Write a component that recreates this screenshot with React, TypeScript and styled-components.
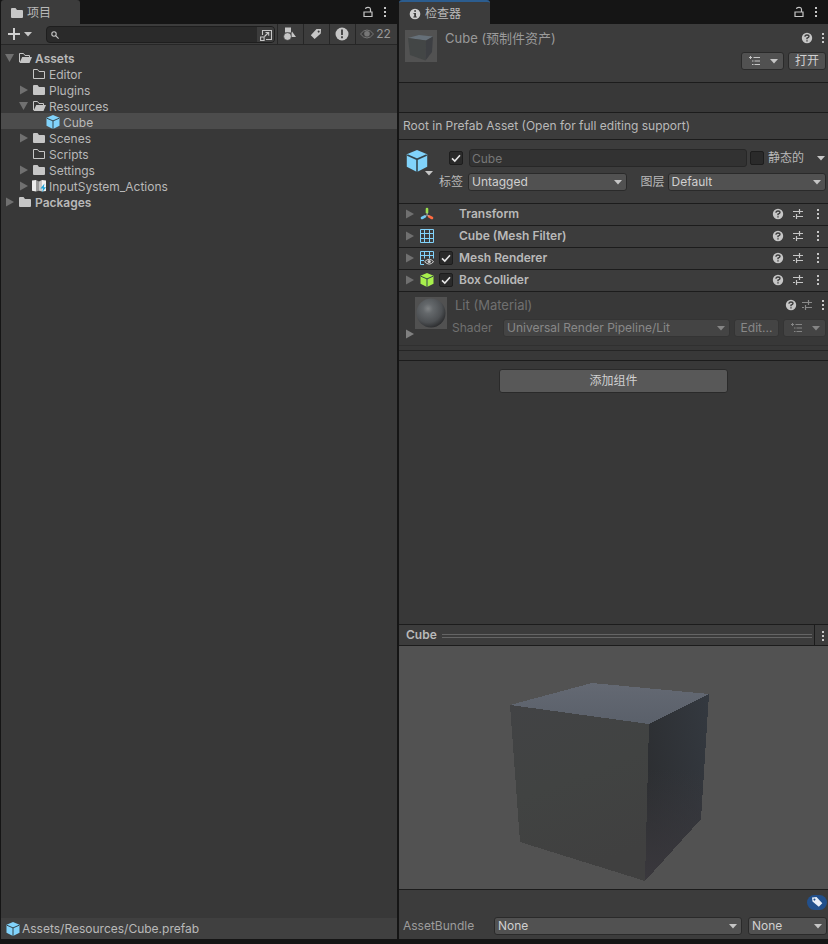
import React from "react";
import styled, { createGlobalStyle, css } from "styled-components";

const c = {
  frame: "#151515",
  panel: "#383838",
  bar: "#3c3c3c",
  line: "#1c1c1c",
  softLine: "#262626",
  text: "#b9b9b9",
  bright: "#d0d0d0",
  icon: "#c6c6c6",
  dim: "#757575",
  field: "#2a2a2a",
  button: "#515151",
  edge: "#2a2a2a",
  selected: "#4c4c4c",
  sky: "#81d3fb",
};

const Global = createGlobalStyle`
  * { box-sizing: border-box; }
  html, body, #root { height: 100%; }
  body {
    margin: 0;
    background: ${c.frame};
    color: ${c.text};
    font: 12px/16px Inter, "Noto Sans CJK SC", sans-serif;
    overflow: hidden;
  }
  button, input, select { font: inherit; color: inherit; margin: 0; }
  svg { display: block; flex: none; }
`;

/* ---------- icons ---------- */

const Folder = () => (
  <svg width="14" height="14" viewBox="0 0 14 14" fill={c.icon}>
    <path d="M1 3q0-1 1-1h3.500l1.500 2h5q1 0 1 1v6q0 1-1 1H2q-1 0-1-1z" />
  </svg>
);
const FolderEmpty = () => (
  <svg width="14" height="14" viewBox="0 0 14 14" fill="none" stroke={c.icon}>
    <path d="M1.500 2.500h4l1.500 2h5.500v7h-11z" />
  </svg>
);
const FolderOpen = () => (
  <svg width="14" height="14" viewBox="0 0 14 14">
    <path d="M1.500 11V2.500h4l1.500 2h4.500V6" fill="none" stroke={c.icon} />
    <path d="M1.500 12l2.700-6H14l-2.500 6z" fill={c.icon} />
  </svg>
);
const CubeIcon = ({ size = 14, color = c.sky }: { size?: number; color?: string }) => (
  <svg width={size} height={size} viewBox="0 0 14 14">
    <path d="M7 0l6.500 2.700v8L7 14 .5 10.700v-8z" fill={color} />
    <path d="M.8 3.200L7 5.900l6.200-2.700M7 5.900V14" fill="none" stroke="#33444c" strokeWidth="1" />
  </svg>
);
const ActionsIcon = () => (
  <svg width="15" height="14" viewBox="0 0 15 14">
    <path d="M0 1.500L4 1v11.500l-4-.8z" fill="#ededed" />
    <path d="M4 1l3 1.500v9.200l-3 .8z" fill="#9a9a9a" />
    <path d="M7 2.500L10 1v11.500l-3-.8z" fill="#c8c8c8" />
    <path d="M10 1l4 .5V12l-4 .5z" fill="#f2f2f2" />
    <path d="M12.500 4.500L8.500 9.500H11l-1 4 4-5.200h-2.200z" fill="#1fa3d8" />
  </svg>
);
const Down = ({ color = c.icon }: { color?: string }) => (
  <svg width="10" height="6" viewBox="0 0 10 6">
    <path d="M1 1h8L5 5.500z" fill={color} />
  </svg>
);
const Fold = ({ open, color = "#707070" }: { open?: boolean; color?: string }) => (
  <svg width="10" height="10" viewBox="0 0 10 10">
    <path d={open ? "M0 1h9L4.500 9z" : "M1 .5v9L9 5z"} fill={color} />
  </svg>
);
const Dots = () => (
  <svg width="4" height="12" viewBox="0 0 4 12" fill={c.icon}>
    <path d="M1 1h2v2H1zM1 5h2v2H1zM1 9h2v2H1z" />
  </svg>
);
const Lock = () => (
  <svg width="10" height="12" viewBox="0 0 10 12" fill="none" stroke={c.icon} strokeWidth="1.200">
    <path d="M1 6h8v4.500H1zM7.500 6V3.500Q7.500 1.300 5 1.300T2.700 3" />
  </svg>
);
const Info = () => (
  <svg width="12" height="12" viewBox="0 0 12 12">
    <circle cx="6" cy="6" r="5.300" fill={c.bright} />
    <path d="M5.200 2.200h1.800v1.500H5.200zM4.500 5H7v3.500h.8v1H4.300v-1h.9V6h-.7z" fill={c.bar} />
  </svg>
);
const Help = () => (
  <svg width="12" height="12" viewBox="0 0 12 12">
    <circle cx="6" cy="6" r="5.200" fill={c.icon} />
    <path d="M4 4.800Q4 3 6 3t2 1.600Q8 5.600 6 6.200V7.200M6 8.200v1.300" fill="none" stroke={c.bar} strokeWidth="1.400" />
  </svg>
);
const Sliders = ({ color = c.icon }: { color?: string }) => (
  <svg width="12" height="12" viewBox="0 0 12 12" fill="none" stroke={color} strokeWidth="1.200">
    <path d="M1 3.500h6M7.500 1v5M8 3.500h3M1 8.500h2M4.500 6v5M5 8.500h6" />
  </svg>
);
const ListIcon = ({ color = c.icon }: { color?: string }) => (
  <svg width="12" height="10" viewBox="0 0 12 10" stroke={color} fill="none">
    <path d="M0 1.500h3M1.500 0v3M4.500 1.500H11M3 5h1.500M5.500 5H11M3 8.500h1.500M5.500 8.500H11" />
  </svg>
);
const Plus = () => (
  <svg width="12" height="12" viewBox="0 0 12 12" stroke={c.bright} strokeWidth="2">
    <path d="M6 0v12M0 6h12" />
  </svg>
);
const SearchIcon = () => (
  <svg width="8" height="8" viewBox="0 0 8 8" fill="none" stroke={c.icon} strokeWidth="1.100">
    <circle cx="3" cy="3" r="2.200" />
    <path d="M4.600 4.600L7.600 7.600" />
  </svg>
);
const PopOut = () => (
  <svg width="12" height="12" viewBox="0 0 12 12" fill="none" stroke={c.icon} strokeWidth="1.100">
    <path d="M2.500 6V1.500h9v9H6M.6 8h3.500v3.500H.6zM4.500 7.500l4-4M5.500 3.500h3.200v3.200" />
  </svg>
);
const Shapes = () => (
  <svg width="14" height="14" viewBox="0 0 14 14" fill={c.icon}>
    <path d="M2 .5h6v5H2zM9 4.500L13 10H8.500V6z" />
    <circle cx="4.500" cy="9.500" r="3.800" stroke={c.bar} strokeWidth=".6" />
  </svg>
);
const Tag = ({ flip, color = c.icon }: { flip?: boolean; color?: string }) => (
  <svg width="12" height="12" viewBox="0 0 12 12" fill={color} fillRule="evenodd">
    {flip ? (
      <path d="M1 1.500L5.500 1 11.300 7.200 7.800 10.800 1.500 5.500zM3.400 2.500a1 1 0 1 0 .1 0z" />
    ) : (
      <path d="M11 1L6.500 1 .8 7.200 4.600 11 10.800 5.500zM8.600 2.500a1 1 0 1 0 .1 0z" />
    )}
  </svg>
);
const Alert = () => (
  <svg width="14" height="14" viewBox="0 0 14 14">
    <circle cx="7" cy="7" r="6.500" fill={c.icon} />
    <path d="M7 2.500v5.500M7 9.300v1.900" stroke={c.bar} strokeWidth="1.800" />
  </svg>
);
const Eye = () => (
  <svg width="14" height="10" viewBox="0 0 14 10">
    <path d="M.5 5Q3.500 1 7 1t6.500 4Q10.500 9 7 9T.5 5z" fill="none" stroke="#777" />
    <circle cx="7" cy="4.700" r="2.800" fill="#777" />
  </svg>
);
const TransformIcon = () => (
  <svg width="14" height="14" viewBox="0 0 14 14" strokeWidth="2.600" strokeLinecap="round">
    <path d="M7 2v3.500" stroke="#9be04e" />
    <path d="M5 9.300L2 11" stroke="#70c9f5" />
    <path d="M9 9.300L12 11" stroke="#ff6b40" />
    <path d="M7 6v2L5 9M7 8l2 1" stroke="#c4c4c4" strokeWidth=".7" />
  </svg>
);
const MeshIcon = ({ eye }: { eye?: boolean }) => (
  <svg width="14" height="14" viewBox="0 0 14 14" fill="none" stroke={c.sky}>
    <path d="M.5.5h13v13H.5zM4.500.5v13M9.500.5v13M.5 4.500h13M.5 9.500h13" />
    {eye && (
      <>
        <path d="M4 7.500h10V14H4z" fill={c.bar} stroke="none" />
        <path d="M4.700 10.700Q9.300 5.800 13.600 10.700 9.300 15.600 4.700 10.700z" stroke={c.bright} />
        <circle cx="9.200" cy="10.500" r="1.600" fill={c.bright} stroke="none" />
      </>
    )}
  </svg>
);
const CubeThumb = () => (
  <svg width="32" height="32" viewBox="0 0 32 32">
    <path d="M0 0h32v32H0z" fill="#525252" />
    <path d="M3 8l11-3 14 1.500-7 4z" fill="#667079" />
    <path d="M3 8l18 2.500-.5 20L5 25z" fill="#434646" />
    <path d="M21 10.500l7-4L27 22l-6.500 8.500z" fill="#3d3f43" />
  </svg>
);
const SphereThumb = () => (
  <svg width="32" height="32" viewBox="0 0 32 32">
    <defs>
      <radialGradient id="ball" cx=".4" cy=".35" r=".68">
        <stop offset="0" stopColor="#808385" />
        <stop offset=".25" stopColor="#64686b" />
        <stop offset=".7" stopColor="#4d5053" />
        <stop offset="1" stopColor="#2b2c2e" />
      </radialGradient>
    </defs>
    <path d="M0 0h32v32H0z" fill="#515151" />
    <circle cx="16" cy="16" r="14.500" fill="url(#ball)" />
  </svg>
);
const CubeRender = () => (
  <svg width="429" height="243" viewBox="0 0 429 243">
    <defs>
      <linearGradient id="top" x1="0" y1="0" x2="0" y2="1">
        <stop offset="0" stopColor="#646973" />
        <stop offset="1" stopColor="#5a606a" />
      </linearGradient>
      <linearGradient id="front" x1="0" y1="0" x2=".3" y2="1">
        <stop offset="0" stopColor="#424345" />
        <stop offset=".5" stopColor="#414342" />
        <stop offset="1" stopColor="#404040" />
      </linearGradient>
      <linearGradient id="side" x1="1" y1="0" x2="0" y2=".5">
        <stop offset="0" stopColor="#343940" />
        <stop offset="1" stopColor="#2c2e31" />
      </linearGradient>
      <linearGradient id="glow" x1="0" y1="0" x2="0" y2="1">
        <stop offset=".4" stopColor="#3a383d" stopOpacity="0" />
        <stop offset="1" stopColor="#3a383d" />
      </linearGradient>
    </defs>
    <g shapeRendering="crispEdges">
      <path d="M111 59L193 37 310 48 250 78z" fill="url(#top)" />
      <path d="M111 59L250 78 246 235 121 196z" fill="url(#front)" />
      <path d="M250 78L310 48 302 173 246 235z" fill="url(#side)" />
      <path d="M250 78L310 48 302 173 246 235z" fill="url(#glow)" />
    </g>
  </svg>
);

/* ---------- shared parts ---------- */

const Window = styled.main`
  height: 100vh;
  display: grid;
  grid-template-columns: minmax(0, 12fr) minmax(0, 13fr);
  gap: 2px;
  padding: 0 0 5px 1px;
`;
const Panel = styled.section`
  display: flex;
  flex-direction: column;
  background: ${c.panel};
  min-width: 0;
`;
const TabStrip = styled.header`
  display: flex;
  align-items: center;
  height: 24px;
  background: ${c.frame};
  padding-right: 10px;
`;
const Tab = styled.button<{ $active?: boolean }>`
  display: flex;
  align-items: center;
  gap: ${(p) => (p.$active ? 4 : 3)}px;
  height: 24px;
  min-width: ${(p) => (p.$active ? 91 : 79)}px;
  padding: 2px 9px 0;
  border: 0;
  border-top: ${(p) => (p.$active ? "2px solid #2c5d8f" : "0")};
  border-radius: 3px 3px 0 0;
  background: ${c.bar};
  color: ${c.text};
  ${(p) => p.$active && css`padding: 1px 10px 0;`}
`;
const Spacer = styled.div`
  flex: 1;
`;
const IconButton = styled.button`
  display: flex;
  align-items: center;
  justify-content: center;
  flex: none;
  padding: 0;
  border: 0;
  background: none;
`;
const MoreButton = styled(IconButton)`
  width: 8px;
  justify-content: flex-end;
`;
const IconGroup = styled.div<{ $gap: number }>`
  display: flex;
  align-items: center;
  gap: ${(p) => p.$gap}px;
`;

const PickBox = styled.span<{ $width?: number; $faded?: boolean }>`
  display: grid;
  align-items: center;
  min-width: 0;
  flex: ${(p) => (p.$width ? `0 0 ${p.$width}px` : "1 1 0")};
  color: ${(p) => (p.$faded ? "#888" : c.bright)};
  > * { grid-area: 1 / 1; }
  > svg { justify-self: end; margin-right: 4px; pointer-events: none; }
`;
const Pick = styled.select<{ $faded?: boolean }>`
  appearance: none;
  width: 100%;
  height: 18px;
  padding: 0 16px 0 3px;
  border: 1px solid ${(p) => (p.$faded ? "#343434" : c.edge)};
  border-radius: 3px;
  background: ${(p) => (p.$faded ? "#444" : c.button)};
  line-height: 16px;
  opacity: 1;
`;
const Choice = ({ label, value, width, faded, id }: { label?: string; value: string; width?: number; faded?: boolean; id?: string }) => (
  <PickBox $width={width} $faded={faded}>
    <Pick id={id} aria-label={label} $faded={faded} defaultValue={value}>
      <option>{value}</option>
    </Pick>
    <Down color={faded ? "#858585" : c.icon} />
  </PickBox>
);

const Push = styled.button<{ $width: number; $faded?: boolean; $menu?: boolean }>`
  display: flex;
  align-items: center;
  justify-content: center;
  gap: 8px;
  flex: none;
  width: ${(p) => p.$width}px;
  height: 18px;
  padding: 0 0 0 ${(p) => (p.$menu ? 3 : 0)}px;
  border: 1px solid ${(p) => (p.$faded ? "#343434" : c.edge)};
  border-radius: 3px;
  background: ${(p) => (p.$faded ? "#444" : c.button)};
  color: ${(p) => (p.$faded ? "#888" : c.bright)};
  white-space: nowrap;
`;

const TickBox = styled.span`
  display: grid;
  width: 14px;
  height: 14px;
  flex: none;
  > * { grid-area: 1 / 1; }
  > svg { pointer-events: none; visibility: hidden; }
  > input:checked + svg { visibility: visible; }
`;
const TickInput = styled.input`
  appearance: none;
  width: 14px;
  height: 14px;
  border: 1px solid #1d1d1d;
  border-radius: 2px;
  background: ${c.field};
`;
const Tick = ({ label, checked, id }: { label?: string; checked?: boolean; id?: string }) => (
  <TickBox>
    <TickInput type="checkbox" id={id} aria-label={label} defaultChecked={checked} />
    <svg width="14" height="14" viewBox="0 0 14 14" fill="none" stroke="#e6e6e6" strokeWidth="1.600">
      <path d="M3 7.300L5.800 10 11 4.200" />
    </svg>
  </TickBox>
);

/* ---------- project panel ---------- */

const Toolbar = styled.div`
  display: flex;
  height: 21px;
  background: ${c.bar};
  border-bottom: 1px solid ${c.softLine};
`;
const AddButton = styled(IconButton)`
  gap: 3px;
  width: 38px;
  padding: 0 0 1px 1px;
`;
const SearchBox = styled.label`
  display: flex;
  align-items: center;
  flex: 1;
  min-width: 0;
  height: 17px;
  margin: 2px 2px 0 7px;
  padding-left: 4px;
  border: 1px solid #1e1e1e;
  border-radius: 4px;
  background: ${c.field};
  overflow: hidden;
`;
const SearchInput = styled.input`
  flex: 1;
  min-width: 0;
  height: 14px;
  padding: 0 4px;
  border: 0;
  background: none;
  outline: none;
`;
const SearchPop = styled(IconButton)`
  width: 17px;
  height: 15px;
  background: ${c.bar};
`;
const ToolButton = styled(IconButton)<{ $width?: number }>`
  width: ${(p) => p.$width || 26}px;
  gap: 2px;
  padding: 0 2px 1px 0;
  border-left: 1px solid ${c.softLine};
  color: #999;
`;
const Tree = styled.ul`
  flex: 1;
  min-height: 0;
  margin: 0;
  padding: 4px 0;
  list-style: none;
`;
const TreeRow = styled.li<{ $depth: number; $selected?: boolean; $bold?: boolean }>`
  display: grid;
  grid-template-columns: 11px 15px 1fr;
  column-gap: 2px;
  align-items: center;
  height: 16px;
  padding-left: ${(p) => 4 + p.$depth * 14}px;
  background: ${(p) => (p.$selected ? c.selected : "transparent")};
  font-weight: ${(p) => (p.$bold ? 600 : 400)};
`;
const NodeName = styled.span`
  padding-top: 2px;
`;
const PathBar = styled.footer`
  display: flex;
  align-items: center;
  gap: 2px;
  height: 21px;
  padding-left: 5px;
  background: #404040;
`;

type Node = { name: string; depth: number; icon: React.ReactNode; fold?: "open" | "shut"; bold?: boolean; selected?: boolean };
const nodes: Node[] = [
  { name: "Assets", depth: 0, icon: <FolderOpen />, fold: "open", bold: true },
  { name: "Editor", depth: 1, icon: <FolderEmpty /> },
  { name: "Plugins", depth: 1, icon: <Folder />, fold: "shut" },
  { name: "Resources", depth: 1, icon: <FolderOpen />, fold: "open" },
  { name: "Cube", depth: 2, icon: <CubeIcon />, selected: true },
  { name: "Scenes", depth: 1, icon: <Folder />, fold: "shut" },
  { name: "Scripts", depth: 1, icon: <FolderEmpty /> },
  { name: "Settings", depth: 1, icon: <Folder />, fold: "shut" },
  { name: "InputSystem_Actions", depth: 1, icon: <ActionsIcon />, fold: "shut" },
  { name: "Packages", depth: 0, icon: <Folder />, fold: "shut", bold: true },
];

const Project = () => (
  <Panel>
    <TabStrip>
      <Tab><Folder />项目</Tab>
      <Spacer />
      <IconGroup $gap={10}>
        <IconButton aria-label="Lock"><Lock /></IconButton>
        <IconButton aria-label="Menu"><Dots /></IconButton>
      </IconGroup>
    </TabStrip>
    <Toolbar>
      <AddButton aria-label="Add"><Plus /><Down /></AddButton>
      <SearchBox>
        <SearchIcon />
        <SearchInput aria-label="Search" />
        <SearchPop aria-label="Open search"><PopOut /></SearchPop>
      </SearchBox>
      <ToolButton aria-label="Filter by type"><Shapes /></ToolButton>
      <ToolButton aria-label="Filter by label"><Tag /></ToolButton>
      <ToolButton aria-label="Filter by log"><Alert /></ToolButton>
      <ToolButton aria-label="Hidden packages" $width={42}><Eye />22</ToolButton>
    </Toolbar>
    <Tree>
      {nodes.map((n) => (
        <TreeRow key={n.name} $depth={n.depth} $selected={n.selected} $bold={n.bold}>
          <span>{n.fold && <Fold open={n.fold === "open"} />}</span>
          {n.icon}
          <NodeName>{n.name}</NodeName>
        </TreeRow>
      ))}
    </Tree>
    <PathBar><CubeIcon />Assets/Resources/Cube.prefab</PathBar>
  </Panel>
);

/* ---------- inspector panel ---------- */

const AssetHead = styled.div`
  display: flex;
  gap: 8px;
  height: 59px;
  padding: 6px 2px 0 6px;
  background: ${c.bar};
  border-bottom: 1px solid ${c.line};
`;
const HeadBody = styled.div`
  flex: 1;
  display: flex;
  flex-direction: column;
  gap: 6px;
  min-width: 0;
`;
const Line = styled.div<{ $gap?: number; $end?: boolean }>`
  display: flex;
  align-items: center;
  justify-content: ${(p) => (p.$end ? "flex-end" : "flex-start")};
  gap: ${(p) => p.$gap || 0}px;
  min-height: 16px;
`;
const TitleLine = styled(Line)`
  padding-right: 1px;
`;
const Title = styled.span<{ $faded?: boolean }>`
  font-size: 13px;
  color: ${(p) => (p.$faded ? "#707070" : "#9a9a9a")};
`;
const Blank = styled.div`
  height: 30px;
  border-bottom: 1px solid ${c.line};
`;
const Notice = styled.div`
  height: 27px;
  padding: 5px 4px;
  background: ${c.bar};
  border-bottom: 1px solid ${c.line};
  white-space: nowrap;
`;
const ObjectHead = styled.div`
  display: flex;
  height: 64px;
  padding: 9px 2px 0 7px;
  background: ${c.bar};
  border-bottom: 1px solid ${c.line};
`;
const ObjectIcon = styled(IconButton)`
  align-items: flex-start;
  width: 28px;
  height: 27px;
  padding-top: 1px;
  justify-content: flex-start;
  margin-right: 5px;
  > svg:last-child { align-self: flex-end; margin-left: -4px; }
`;
const ObjectFields = styled.div`
  flex: 1;
  min-width: 0;
  display: flex;
  flex-direction: column;
  gap: 6px;
`;
const NameInput = styled.input`
  flex: 1;
  min-width: 0;
  height: 18px;
  margin: 0 3px 0 6px;
  padding: 0 2px;
  border: 1px solid #272727;
  border-radius: 3px;
  background: #323232;
  color: #777;
`;
const NameLine = styled(Line)`
  height: 18px;
  padding-left: 10px;
`;
const StaticLabel = styled.label`
  margin: 0 12px 0 4px;
`;
const FieldLabel = styled.label<{ $second?: boolean }>`
  width: ${(p) => (p.$second ? 41 : 29)}px;
  padding-left: ${(p) => (p.$second ? 14 : 0)}px;
  flex: none;
  white-space: nowrap;
`;
const ComponentRow = styled.div`
  display: grid;
  grid-template-columns: 15px 19px 20px 1fr auto;
  align-items: center;
  height: 22px;
  padding: 0 8px 1px 6px;
  background: ${c.bar};
  border-bottom: 1px solid ${c.line};
  font-weight: 600;
`;
const Material = styled.div`
  display: flex;
  height: 54px;
  padding: 5px 2px 0 6px;
  border-bottom: 1px solid #303030;
`;
const MaterialFold = styled(IconButton)`
  width: 10px;
  height: 10px;
  margin-top: 32px;
`;
const MaterialBody = styled.div`
  flex: 1;
  min-width: 0;
  display: flex;
  flex-direction: column;
  gap: 6px;
  padding-left: 5px;
`;
const MaterialTitle = styled(TitleLine)`
  padding-left: 3px;
`;
const ShaderLabel = styled.label`
  width: 47px;
  color: #707070;
`;
const MaterialEnd = styled.div`
  height: 15px;
  border-bottom: 1px solid ${c.line};
  &::before {
    content: "";
    display: block;
    height: 4px;
    border-bottom: 1px solid #252525;
  }
`;
const AddArea = styled.div`
  flex: 1;
  display: flex;
  align-items: flex-start;
  justify-content: center;
  padding: 8px 0;
`;
const AddComponent = styled.button`
  width: 229px;
  height: 24px;
  padding: 0;
  border: 1px solid ${c.edge};
  border-radius: 3px;
  background: #585858;
  color: ${c.bright};
`;
const PreviewBar = styled.div`
  display: flex;
  align-items: center;
  height: 22px;
  background: ${c.bar};
  border: solid ${c.line};
  border-width: 1px 0;
  padding-left: 7px;
  font-weight: 600;
`;
const Grip = styled.div`
  flex: 1;
  height: 4px;
  margin: 2px 2px 0 5px;
  border: solid #656565;
  border-width: 1px 0;
`;
const PreviewMenu = styled(IconButton)`
  width: 14px;
  height: 20px;
  padding: 2px 0 0 3px;
  border-left: 1px solid ${c.line};
`;
const Preview = styled.div`
  display: flex;
  justify-content: center;
  background: #525252;
  border-bottom: 1px solid ${c.line};
  overflow: hidden;
`;
const BundleArea = styled.footer`
  height: 49px;
  background: ${c.bar};
  padding: 4px 1px 0 4px;
`;
const TagPill = styled(IconButton)`
  width: 20px;
  height: 15px;
  border-radius: 8px;
  background: #22508c;
`;
const BundleLine = styled(Line)`
  height: 18px;
  margin-top: 7px;
`;
const BundleLabel = styled.label`
  width: 91px;
  color: #9c9c9c;
`;
const Gap = styled.span`
  width: 6px;
`;

const components = [
  { name: "Transform", icon: <TransformIcon /> },
  { name: "Cube (Mesh Filter)", icon: <MeshIcon /> },
  { name: "Mesh Renderer", icon: <MeshIcon eye />, toggle: true },
  { name: "Box Collider", icon: <CubeIcon color="#a8f04c" />, toggle: true },
];

const RowTools = ({ gap = 8, faded }: { gap?: number; faded?: boolean }) => (
  <IconGroup $gap={gap}>
    <IconButton aria-label="Help"><Help /></IconButton>
    <IconButton aria-label="Presets"><Sliders color={faded ? "#8a8a8a" : c.icon} /></IconButton>
    <MoreButton aria-label="More"><Dots /></MoreButton>
  </IconGroup>
);

const Inspector = () => (
  <Panel>
    <TabStrip>
      <Tab $active><Info />检查器</Tab>
      <Spacer />
      <IconGroup $gap={10}>
        <IconButton aria-label="Lock"><Lock /></IconButton>
        <IconButton aria-label="Menu"><Dots /></IconButton>
      </IconGroup>
    </TabStrip>
    <AssetHead>
      <CubeThumb />
      <HeadBody>
        <TitleLine $gap={8}>
          <Title>Cube (预制件资产)</Title>
          <Spacer />
          <IconButton aria-label="Help"><Help /></IconButton>
          <IconButton aria-label="More"><Dots /></IconButton>
        </TitleLine>
        <Line $gap={4} $end>
          <Push $width={43} $menu aria-label="View options"><ListIcon /><Down /></Push>
          <Push $width={38}>打开</Push>
        </Line>
      </HeadBody>
    </AssetHead>
    <Blank />
    <Notice>Root in Prefab Asset (Open for full editing support)</Notice>
    <ObjectHead>
      <ObjectIcon aria-label="Icon"><CubeIcon size={22} /><Down /></ObjectIcon>
      <ObjectFields>
        <NameLine>
          <Tick label="Active" checked />
          <NameInput aria-label="Name" defaultValue="Cube" />
          <Tick id="static" />
          <StaticLabel htmlFor="static">静态的</StaticLabel>
          <IconButton aria-label="Static options"><Down /></IconButton>
        </NameLine>
        <Line>
          <FieldLabel htmlFor="tag">标签</FieldLabel>
          <Choice id="tag" value="Untagged" />
          <FieldLabel htmlFor="layer" $second>图层</FieldLabel>
          <Choice id="layer" value="Default" />
        </Line>
      </ObjectFields>
    </ObjectHead>
    {components.map((item) => (
      <ComponentRow key={item.name}>
        <Fold />
        {item.icon}
        <span>{item.toggle && <Tick label={item.name} checked />}</span>
        <span>{item.name}</span>
        <RowTools />
      </ComponentRow>
    ))}
    <Material>
      <MaterialFold aria-label="Expand material"><Fold color="#808080" /></MaterialFold>
      <SphereThumb />
      <MaterialBody>
        <MaterialTitle>
          <Title $faded>Lit (Material)</Title>
          <Spacer />
          <RowTools gap={4} faded />
        </MaterialTitle>
        <Line $gap={4}>
          <ShaderLabel htmlFor="shader">Shader</ShaderLabel>
          <Choice id="shader" value="Universal Render Pipeline/Lit" faded />
          <Push $width={45} $faded>Edit...</Push>
          <Push $width={43} $faded $menu aria-label="Shader options"><ListIcon color="#858585" /><Down color="#858585" /></Push>
        </Line>
      </MaterialBody>
    </Material>
    <MaterialEnd />
    <AddArea><AddComponent>添加组件</AddComponent></AddArea>
    <PreviewBar>
      Cube
      <Grip />
      <PreviewMenu aria-label="Preview menu"><Dots /></PreviewMenu>
    </PreviewBar>
    <Preview><CubeRender /></Preview>
    <BundleArea>
      <Line $end><TagPill aria-label="Asset labels"><Tag flip color="#e8eef8" /></TagPill></Line>
      <BundleLine>
        <BundleLabel htmlFor="bundle">AssetBundle</BundleLabel>
        <Choice id="bundle" value="None" />
        <Gap />
        <Choice label="AssetBundle variant" value="None" width={79} />
      </BundleLine>
    </BundleArea>
  </Panel>
);

export default function App() {
  return (
    <>
      <Global />
      <Window>
        <Project />
        <Inspector />
      </Window>
    </>
  );
}
